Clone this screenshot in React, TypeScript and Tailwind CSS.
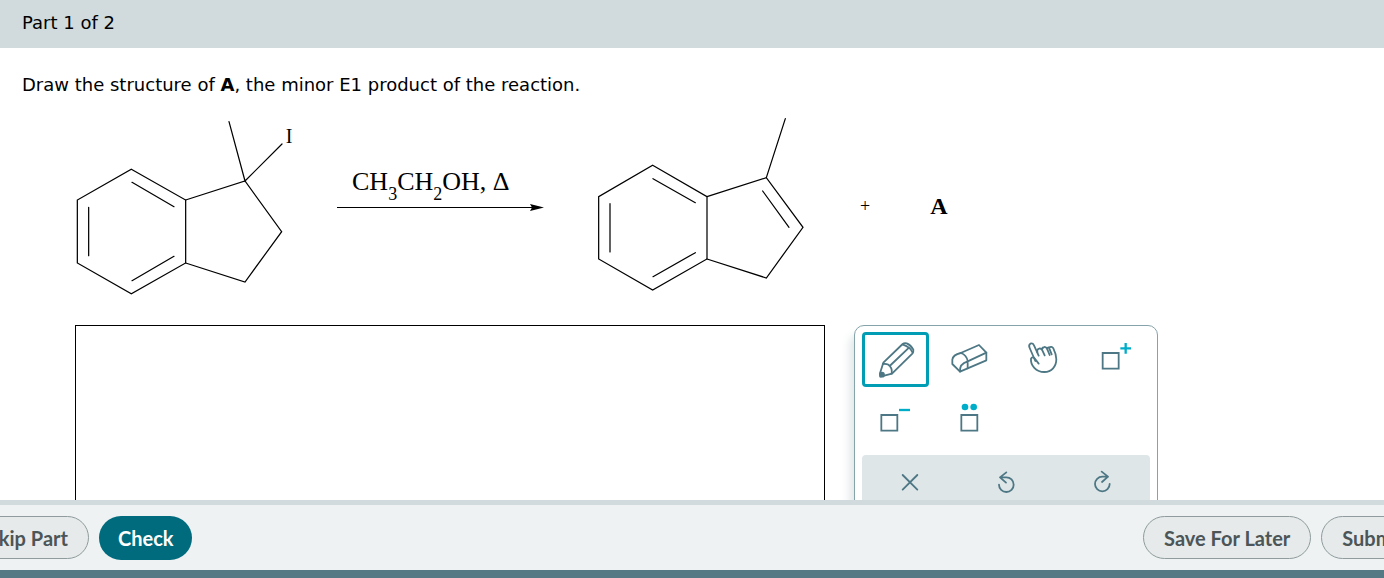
import type { ReactNode } from "react";

function ToolIcon({ children }: { children: ReactNode }) {
  return (
    <svg
      viewBox="0 0 150 144"
      className="h-12 w-[50px] fill-none stroke-[#4d7784]"
      strokeWidth="5.4"
      strokeLinejoin="round"
      strokeLinecap="round"
      aria-hidden="true"
    >
      {children}
    </svg>
  );
}

function Tool({ label, active, children }: { label: string; active?: boolean; children: ReactNode }) {
  return (
    <button
      type="button"
      aria-label={label}
      aria-pressed={!!active}
      className={
        active
          ? "flex h-[55px] items-center justify-center rounded border-3 border-[#009db5] bg-white"
          : "flex h-[55px] items-center justify-center rounded border-3 border-transparent bg-white"
      }
    >
      {children}
    </button>
  );
}

function ActionIcon({ children }: { children: ReactNode }) {
  return (
    <svg
      viewBox="0 0 72 72"
      className="size-6 fill-none stroke-[#4d7784]"
      strokeWidth="5.4"
      strokeLinejoin="round"
      strokeLinecap="round"
      aria-hidden="true"
    >
      {children}
    </svg>
  );
}

function Reactant() {
  return (
    <svg
      viewBox="0 0 780 600"
      className="h-[200px] w-[260px] shrink-0 fill-none stroke-black"
      strokeWidth="3.7"
      strokeLinecap="round"
      role="img"
      aria-label="1-iodo-1-methylindane"
    >
      <path d="M214 178 L377 270 V459 L214 551 L52 459 V270 Z" />
      <path d="M216 217 L342 290 M86 292 V437 M216 512 L342 439" />
      <path d="M377 270 L555 213 L665 365 L555 516 L377 459" />
      <path d="M507 35 L555 213 L666 102" />
      <text
        x="687"
        y="98"
        textAnchor="middle"
        className="fill-black stroke-none font-['Liberation_Serif',serif] text-[60px]"
      >
        I
      </text>
    </svg>
  );
}

function Product() {
  return (
    <svg
      viewBox="0 0 720 600"
      className="h-[200px] w-[240px] shrink-0 fill-none stroke-black"
      strokeWidth="3.7"
      strokeLinecap="round"
      role="img"
      aria-label="3-methylindene"
    >
      <path d="M218 166 L381 260 V447 L218 540 L56 447 V260 Z" />
      <path d="M219 206 L346 278 M90 281 V426 M219 500 L346 428" />
      <path d="M381 260 L559 203 L669 352 L559 504 L381 447" />
      <path d="M616 26 L559 203 M548 243 L627 352" />
    </svg>
  );
}

const outlined =
  "h-[43px] shrink-0 rounded-full border border-[#8f9b9c] bg-[#e6eaeb] px-5 text-xl font-bold whitespace-nowrap text-[#4c5557]";

export default function App() {
  return (
    <div className="flex h-screen flex-col overflow-hidden bg-white font-['DejaVu_Sans',sans-serif] text-lg text-black">
      <header className="flex h-12 shrink-0 items-center bg-[#d1dadc] px-[22px] pb-0.5">
        <h1>Part 1 of 2</h1>
      </header>

      <main className="min-h-0 flex-1 overflow-hidden">
        <p className="px-[22px] pt-[25px] leading-6">
          Draw the structure of <b>A</b>, the minor E1 product of the reaction.
        </p>

        <div className="mt-[13px] flex items-start pl-[60px] font-['Liberation_Serif',serif]">
          <Reactant />
          <div className="ml-[17px] w-[207px] shrink-0 pt-[60px]">
            <div className="pl-[15px] text-[26px] leading-6">
              CH<sub className="-bottom-2.5 text-lg leading-none">3</sub>CH
              <sub className="-bottom-2.5 text-lg leading-none">2</sub>OH, Δ
            </div>
            <svg viewBox="0 0 207 8" className="mt-[9px] block h-2 w-full" aria-hidden="true">
              <path d="M0 4.5 H196" className="stroke-black" strokeWidth="1.2" />
              <path d="M193 1 L207 4.5 L193 8 L195 4.5 Z" className="fill-black" />
            </svg>
          </div>
          <div className="ml-9">
            <Product />
          </div>
          <div className="flex items-center gap-[60px] pt-20 pl-10">
            <span className="text-lg leading-8">+</span>
            <b className="text-2xl leading-8">A</b>
          </div>
        </div>

        <div className="mt-[15px] flex items-start gap-[29px] pl-[75px]">
          <div className="h-[400px] w-[750px] shrink-0 border border-black" role="application" aria-label="Structure drawing area" />

          <section
            aria-label="Drawing tools"
            className="w-[304px] shrink-0 rounded-[10px] border border-[#85a3aa] bg-white px-[7px] pt-1.5 pb-2 shadow-[-6px_8px_10px_-2px_#dfe5e6]"
          >
            <div className="grid grid-cols-4 gap-x-[7px] gap-y-1">
              <Tool label="Pencil" active>
                <ToolIcon>
                  <path d="M40 80 L98 24 Q103 20 110 22 Q123 27 130 41 Q131 48 127 53 L66 113 L31 122 L30 112 Z" />
                  <path d="M39 84 Q55 82 60 91 Q67 98 65 113 M59 90 L117 35 M99 26 Q108 29 117 35 Q124 41 128 50" />
                  <circle cx="36" cy="116" r="6" className="fill-[#4d7784]" />
                </ToolIcon>
              </Tool>
              <Tool label="Eraser">
                <ToolIcon>
                  <path d="M50 51 L105 27 L127 50 V73 L48 107 L25 84 V71 Q27 56 50 51 Z" />
                  <path d="M50 51 Q68 56 71 76 V97 M48 107 Q46 83 71 76 L127 50" />
                </ToolIcon>
              </Tool>
              <Tool label="Hand">
                <ToolIcon>
                  <path d="M62 59 L48 28 Q44 20 37 23 Q31 27 35 36 L52 75" />
                  <path d="M62 83 L49 66 Q43 61 39 68 C37 88 54 108 79 108 C101 108 115 91 115 70 C115 57 110 45 106 37 Q100 29 93 35 L101 55" />
                  <path d="M58 49 Q56 40 63 38 Q69 36 73 43 L80 58 M72 42 Q72 34 79 33 Q84 32 88 40 L95 57 M87 39 Q88 33 93 35" />
                </ToolIcon>
              </Tool>
              <Tool label="Positive charge">
                <ToolIcon>
                  <path d="M32 51 H80 V98 H32 Z" strokeLinejoin="miter" />
                  <path d="M85 37 H117 M101 21 V53" className="stroke-[#00adc9]" strokeWidth="7" strokeLinecap="butt" />
                </ToolIcon>
              </Tool>
              <Tool label="Negative charge">
                <ToolIcon>
                  <path d="M34 60 H82 V107 H34 Z" strokeLinejoin="miter" />
                  <path d="M87 45 H120" className="stroke-[#00adc9]" strokeWidth="7" strokeLinecap="butt" />
                </ToolIcon>
              </Tool>
              <Tool label="Lone pair">
                <ToolIcon>
                  <path d="M52 60 H100 V107 H52 Z" strokeLinejoin="miter" />
                  <circle cx="63" cy="36" r="10" className="fill-[#00adc9] stroke-none" />
                  <circle cx="89" cy="36" r="10" className="fill-[#00adc9] stroke-none" />
                </ToolIcon>
              </Tool>
            </div>

            <div className="mt-[9px] grid h-[54px] grid-cols-3 rounded bg-[#dee6e8]">
              <button type="button" aria-label="Clear" className="flex items-center justify-center">
                <ActionIcon>
                  <path d="M14 15 L58 59 M58 15 L14 59" />
                </ActionIcon>
              </button>
              <button type="button" aria-label="Undo" className="flex items-center justify-center">
                <ActionIcon>
                  <path d="M18 22 H37 A22 22 0 1 1 15 44 M37 7 L18 22 L36 38" />
                </ActionIcon>
              </button>
              <button type="button" aria-label="Redo" className="flex items-center justify-center">
                <ActionIcon>
                  <path d="M54 20 H37 A22 22 0 1 0 59 42 M35 5 L54 20 L36 36" />
                </ActionIcon>
              </button>
            </div>
          </section>
        </div>
      </main>

      <footer className="shrink-0 overflow-hidden border-t-5 border-b-8 border-t-[#d1dadc] border-b-[#557a85] bg-[#eef2f3] font-['Lato',sans-serif]">
        <div className="-mr-[42px] -ml-[33px] flex h-[65px] items-start justify-between pt-[11px]">
          <div className="flex gap-2.5">
            <button type="button" className={outlined}>
              Skip Part
            </button>
            <button
              type="button"
              className="h-11 shrink-0 rounded-full bg-[#006b7d] px-[19px] text-xl font-bold text-white"
            >
              Check
            </button>
          </div>
          <div className="flex gap-2.5">
            <button type="button" className={outlined}>
              Save For Later
            </button>
            <button type="button" className={outlined}>
              Submit
            </button>
          </div>
        </div>
      </footer>
    </div>
  );
}
